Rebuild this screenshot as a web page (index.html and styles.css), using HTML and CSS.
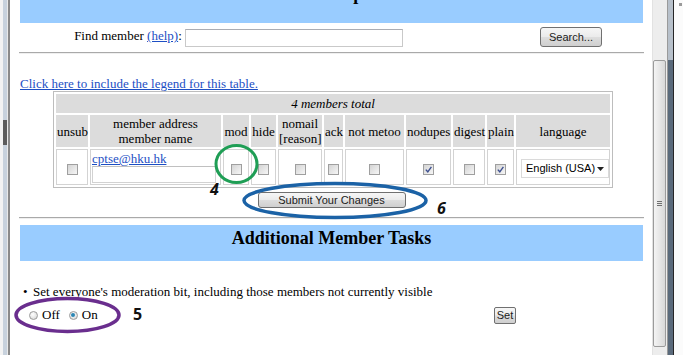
FILE: index.html
```html
<!DOCTYPE html>
<html>
<head>
<meta charset="utf-8">
<link rel="stylesheet" href="styles.css">
</head>
<body>
<div class="window">
  <div class="frame-left"><span class="fl-a"></span><span class="fl-b"></span><span class="fl-c"></span><span class="fl-d"></span></div>
  <div class="viewport">
    <div class="page">
      <div class="band band-top">Membership List</div>
      <form class="find-row">
        <div class="find-left">Find member <a href="#">(help)</a>: <input type="text" class="find-input"></div>
        <div class="find-right"><button type="button" class="btn btn-search">Search...</button></div>
      </form>
      <hr class="rule">
      <p class="legend"><a href="#">Click here to include the legend for this table.</a></p>
      <table class="members">
        <colgroup>
          <col class="c-unsub"><col class="c-addr"><col class="c-mod"><col class="c-hide"><col class="c-nomail"><col class="c-ack"><col class="c-metoo"><col class="c-nodupes"><col class="c-digest"><col class="c-plain"><col class="c-lang">
        </colgroup>
        <tr><td colspan="11" class="total">4 members total</td></tr>
        <tr class="head">
          <th>unsub</th><th>member address<br>member name</th><th>mod</th><th>hide</th><th>nomail<br>[reason]</th><th>ack</th><th>not metoo</th><th>nodupes</th><th>digest</th><th>plain</th><th>language</th>
        </tr>
        <tr class="data">
          <td><span class="cb"></span></td>
          <td class="addr"><a href="#">cptse@hku.hk</a><input type="text" class="name-input"></td>
          <td><span class="cb"></span></td>
          <td><span class="cb"></span></td>
          <td><span class="cb"></span></td>
          <td><span class="cb"></span></td>
          <td><span class="cb"></span></td>
          <td><span class="cb on"><svg viewBox="0 0 9 9" width="9" height="9"><path d="M1.8 4.6 L3.8 6.8 L7.4 1.8" fill="none" stroke="#3d4f8f" stroke-width="1.4"/></svg></span></td>
          <td><span class="cb"></span></td>
          <td><span class="cb on"><svg viewBox="0 0 9 9" width="9" height="9"><path d="M1.8 4.6 L3.8 6.8 L7.4 1.8" fill="none" stroke="#3d4f8f" stroke-width="1.4"/></svg></span></td>
          <td class="lang"><div class="select"><span>English (USA)</span><svg viewBox="0 0 7 4" width="7" height="4"><path d="M0 0 H7 L3.5 4 Z" fill="#222"/></svg></div></td>
        </tr>
      </table>
      <div class="submit-row"><button type="button" class="btn btn-submit">Submit Your Changes</button></div>
      <hr class="rule rule2">
      <div class="band band-tasks">Additional Member Tasks</div>
      <ul class="tasks"><li>Set everyone's moderation bit, including those members not currently visible</li></ul>
      <div class="radio-row">
        <div class="radios">
          <span class="radio"></span><span class="rlabel">Off</span>
          <span class="radio on"></span><span class="rlabel">On</span>
        </div>
        <button type="button" class="btn btn-set">Set</button>
      </div>
    </div>
  </div>
  <div class="scroll">
    <div class="sb-track"><div class="sb-thumb"><span class="grip"></span><span class="grip"></span><span class="grip"></span></div></div>
    <span class="sb-line"></span>
    <span class="sb-dark"></span>
    <span class="sb-black"></span>
    <span class="sb-rest"><span class="mark"></span></span>
  </div>

  <svg class="marks" width="683" height="355" viewBox="0 0 683 355">
    <ellipse cx="236.5" cy="164" rx="20.5" ry="18.5" fill="none" stroke="#1f9e55" stroke-width="3"/>
    <ellipse cx="335" cy="200.5" rx="91" ry="17" fill="none" stroke="#1b62a6" stroke-width="3.5"/>
    <ellipse cx="67.5" cy="315" rx="51.5" ry="16.5" fill="none" stroke="#6a2e8e" stroke-width="3.5"/>
  </svg>
  <span class="num num4">4</span>
  <span class="num num6">6</span>
  <span class="num num5">5</span>
</div>
</body>
</html>
```
FILE: styles.css
```css
* { box-sizing: border-box; }
html, body { margin: 0; padding: 0; }
body {
  width: 683px; height: 355px; overflow: hidden; background: #fff;
  font-family: "Liberation Serif", "Times New Roman", serif; font-size: 13px; color: #000;
}
a { color: #1d4fc4; text-decoration: underline; }

.window { position: relative; display: flex; width: 683px; height: 355px; overflow: hidden; }

.frame-left { display: flex; width: 10px; flex: none; }
.fl-a { width: 3px; background: #f3f3f3; }
.fl-b { width: 4px; background: linear-gradient(#c8d2dd 0, #c8d2dd 120px, #5c5c5c 120px, #5c5c5c 145px, #c8d2dd 145px); }
.fl-c { width: 1px; background: #e9e9e9; }
.fl-d { width: 2px; background: #8a8a8a; }

.viewport { width: 642px; height: 355px; flex: none; overflow: hidden; }
.page { margin-top: -13px; padding: 0 9px 0 10px; }

.band {
  background: #99ccff; height: 36px; padding-top: 2px;
  text-align: center; font-weight: bold; font-size: 18px; line-height: 22px;
}
.band-top { padding-top: 0; line-height: 15px; }

.find-row { display: grid; grid-template-columns: 383px 1fr; align-items: center; height: 28px; margin: 0; }
.find-left { text-align: right; line-height: 18px; }
.find-input {
  width: 218px; height: 18px; margin: 0; vertical-align: middle;
  border: 1px solid #c9c9c9; border-top-color: #abadb3; background: #fff;
}
.find-right { padding-left: 137px; }

.btn {
  font-family: "Liberation Sans", Arial, sans-serif; font-size: 11px; color: #1b1b1b;
  border: 1px solid #707070; border-radius: 3px; padding: 0;
  background: linear-gradient(#f6f6f6 0, #ebebeb 48%, #dddddd 52%, #cfcfcf 100%);
}
.btn-search { width: 62px; height: 20px; }

.rule { height: 2px; margin: 1px -1px 0 -1px; border: 0; border-top: 1px solid #a9a9a9; border-bottom: 1px solid #efefef; }

.legend { margin: 22px 0 0; line-height: 15px; }

.members {
  table-layout: fixed; width: 560px; margin: 0 0 0 33px;
  border-collapse: separate; border-spacing: 2px; border: 1px solid #bdbdbd;
}
.c-unsub { width: 32px; } .c-addr { width: 131px; } .c-mod { width: 26px; } .c-hide { width: 25px; }
.c-nomail { width: 44px; } .c-ack { width: 19px; } .c-metoo { width: 59px; } .c-nodupes { width: 45px; }
.c-digest { width: 32px; } .c-plain { width: 27px; } .c-lang { width: 94px; }

.members td, .members th { padding: 0; font-size: 13px; line-height: 15px; }
.total { background: #dcdcdc; border: 1px solid #dcdcdc; font-style: italic; text-align: center; height: 19px; }
.head th { background: #dcdcdc; border: 1px solid #dcdcdc; font-weight: normal; text-align: center; height: 32px; white-space: nowrap; }
.data td { border: 1px solid #d3d3d3; text-align: center; vertical-align: middle; height: 36px; }
.data td.addr { text-align: left; vertical-align: top; padding: 1px 0 0 1px; }
.name-input { display: block; width: 124px; height: 17px; margin: 0; border: 1px solid #d2d2d2; border-top-color: #c0c0c0; background: #fff; }

.cb {
  display: inline-block; width: 11px; height: 11px; vertical-align: middle; margin-top: 4px;
  border: 1px solid #9f9f9f; background: linear-gradient(135deg, #d4d4d4, #f6f6f6);
  line-height: 0;
}
.cb svg { display: block; }

.members td.lang { padding: 0 2px; }
.select {
  display: flex; align-items: center; justify-content: space-between; white-space: nowrap;
  width: 88px; height: 19px; margin: 3px 0 0 2px; padding: 0 4px 0 4px;
  border: 1px solid #dadada; background: #fff;
  font-family: "Liberation Sans", Arial, sans-serif; font-size: 11px; line-height: 17px; text-align: left;
}

.submit-row { display: flex; justify-content: center; margin-top: 4px; }
.btn-submit { width: 148px; height: 16px; }

.rule2 { margin-top: 9px; }
.band-tasks { margin-top: 6px; }

.tasks { margin: 23px 0 0; padding-left: 0; list-style: none; line-height: 15px; }
.tasks li { padding-left: 13px; }
.tasks li::before { content: "\2022"; display: inline-block; width: 10px; margin-left: -10px; }

.radio-row { display: grid; grid-template-columns: 474px auto; align-items: center; margin-top: 7px; height: 18px; }
.radios { display: flex; align-items: center; padding-left: 9px; }
.radio {
  width: 9px; height: 9px; border-radius: 50%;
  border: 1px solid #9a9a9a; background: radial-gradient(circle at 40% 35%, #ffffff, #d2d2d2);
  display: flex; align-items: center; justify-content: center;
}
.radio.on::after { content: ""; width: 4px; height: 4px; border-radius: 50%; background: #2b86b4; }
.rlabel { margin: 0 9px 0 4px; }
.btn-set { width: 22px; height: 17px; border-radius: 2px; }

.scroll { display: flex; flex: none; width: 31px; height: 355px; }
.sb-track { width: 15px; background: #ededed; border-left: 1px solid #e2e2e2; padding: 60px 1px 0 0; }
.sb-thumb {
  height: 287px; border: 1px solid #9b9b9b; border-radius: 2px;
  background: linear-gradient(90deg, #f4f4f4, #e4e4e4 60%, #d8d8d8);
  display: flex; flex-direction: column; align-items: center; justify-content: center; gap: 1px;
}
.grip { width: 5px; height: 1px; background: #6f6f6f; }
.sb-line { width: 1px; background: #9a9a9a; }
.sb-dark { width: 5px; background: linear-gradient(#b7c0ca 0, #b7c0ca 60px, #5a6a7b 60px); }
.sb-black { width: 1px; background: #262626; }
.sb-rest { width: 9px; background: #fbfbfb; padding: 3px 0 0 5px; }
.mark { display: block; width: 3px; height: 3px; background: #9a9a9a; }

.marks { position: absolute; left: 0; top: 0; pointer-events: none; }
.num {
  position: absolute; font-family: "Open Sans", "DejaVu Sans", sans-serif; font-weight: bold; font-style: italic;
  font-size: 16px; line-height: 16px; color: #111;
}
.num4 { left: 210px; top: 181px; }
.num6 { left: 437px; top: 200px; }
.num5 { left: 133px; top: 306px; font-style: normal; }
```
